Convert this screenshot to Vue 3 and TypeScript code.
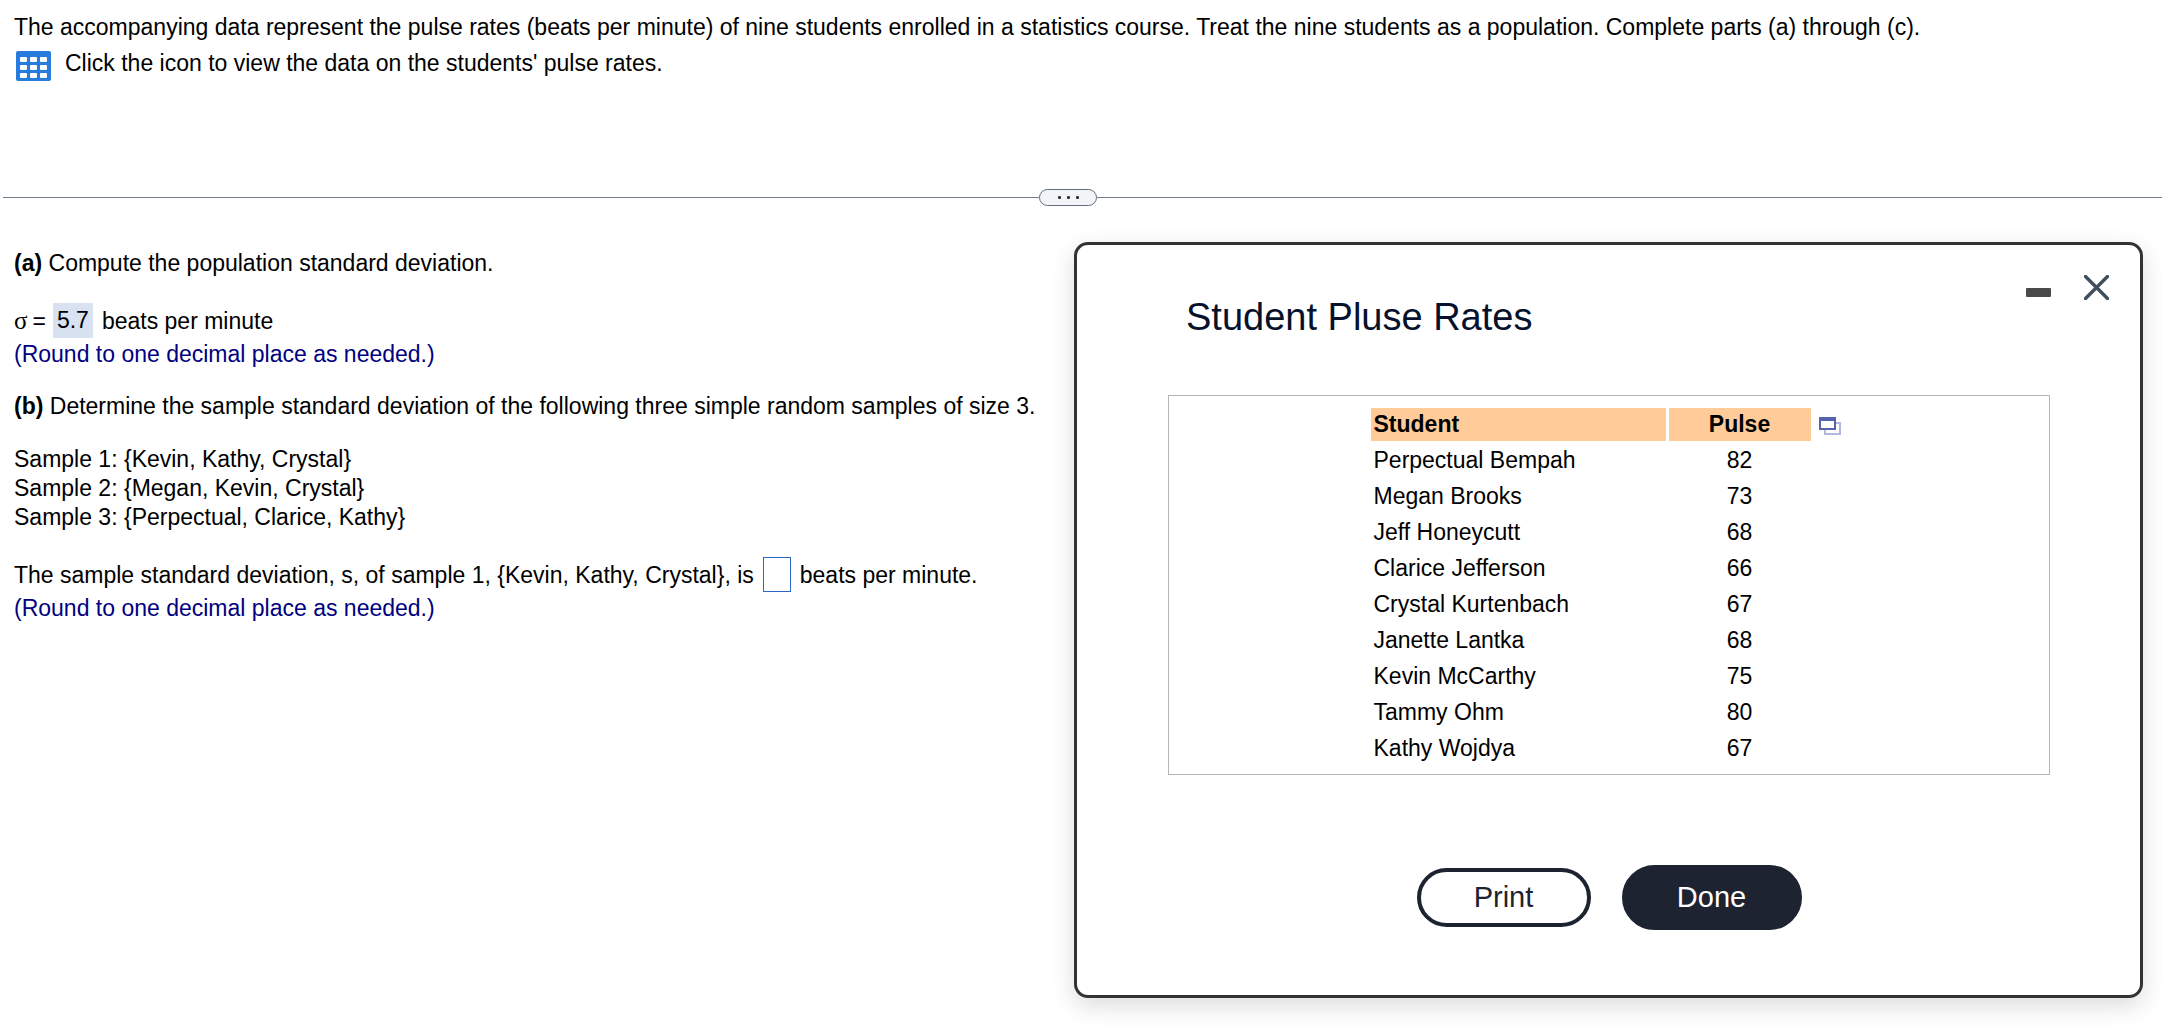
<script setup lang="ts">
import { ref } from 'vue'

interface Student {
  name: string
  pulse: number
}

const students: Student[] = [
  { name: 'Perpectual Bempah', pulse: 82 },
  { name: 'Megan Brooks', pulse: 73 },
  { name: 'Jeff Honeycutt', pulse: 68 },
  { name: 'Clarice Jefferson', pulse: 66 },
  { name: 'Crystal Kurtenbach', pulse: 67 },
  { name: 'Janette Lantka', pulse: 68 },
  { name: 'Kevin McCarthy', pulse: 75 },
  { name: 'Tammy Ohm', pulse: 80 },
  { name: 'Kathy Wojdya', pulse: 67 },
]

const samples: string[][] = [
  ['Kevin', 'Kathy', 'Crystal'],
  ['Megan', 'Kevin', 'Crystal'],
  ['Perpectual', 'Clarice', 'Kathy'],
]

const cells = [0, 1, 2]
const answer = ref('')
const dialogOpen = ref(true)
</script>

<template>
  <div class="page">
    <header class="intro">
      <p>
        The accompanying data represent the pulse rates (beats per minute) of nine students enrolled in a
        statistics course. Treat the nine students as a population. Complete parts (a) through (c).
      </p>
      <div class="data-link">
        <button class="icon-button" type="button" aria-label="View the data" @click="dialogOpen = true">
          <svg width="35" height="30" viewBox="0 0 35 30" aria-hidden="true">
            <rect width="35" height="30" rx="2" fill="#267bdc" />
            <g fill="#fff">
              <template v-for="r in cells" :key="r">
                <rect v-for="c in cells" :key="c" :x="4 + c * 10" :y="6 + r * 8" width="7" height="5" rx="1" />
              </template>
            </g>
          </svg>
        </button>
        <p>Click the icon to view the data on the students' pulse rates.</p>
      </div>
    </header>

    <div class="divider">
      <button class="divider-handle" type="button" aria-label="Resize panels">
        <i></i><i></i><i></i>
      </button>
    </div>

    <div class="columns">
      <main class="question">
        <p><b>(a)</b> Compute the population standard deviation.</p>
        <p class="answer-line sigma-line">
          <span class="sigma">σ</span><span class="equals">=</span><span class="given">5.7</span><span>beats per minute</span>
        </p>
        <p class="hint">(Round to one decimal place as needed.)</p>
        <p class="part-b"><b>(b)</b> Determine the sample standard deviation of the following three simple random samples of size 3.</p>
        <ul class="samples">
          <li v-for="(s, i) in samples" :key="i">Sample {{ i + 1 }}: {{ '{' + s.join(', ') + '}' }}</li>
        </ul>
        <div class="answer-line">
          <label for="answer">The sample standard deviation, s, of sample 1, {Kevin, Kathy, Crystal}, is</label>
          <input id="answer" v-model="answer" type="text" />
          <span>beats per minute.</span>
        </div>
        <p class="hint">(Round to one decimal place as needed.)</p>
      </main>

      <section v-if="dialogOpen" class="dialog" role="dialog" aria-labelledby="dialog-title">
        <div class="dialog-head">
          <h2 id="dialog-title">Student Pluse Rates</h2>
          <div class="window-controls">
            <button class="icon-button" type="button" aria-label="Minimize">
              <svg width="25" height="25" viewBox="0 0 25 25" aria-hidden="true">
                <rect y="13" width="25" height="9" rx="1" fill="#4a4a4a" />
              </svg>
            </button>
            <button class="icon-button" type="button" aria-label="Close" @click="dialogOpen = false">
              <svg width="25" height="25" viewBox="0 0 25 25" aria-hidden="true">
                <path d="M1.5 1.5 23.5 23.5M23.5 1.5 1.5 23.5" stroke="#414e5b" stroke-width="3.4" stroke-linecap="round" />
              </svg>
            </button>
          </div>
        </div>

        <div class="data-box">
          <table>
            <thead>
              <tr>
                <th class="name" scope="col">Student</th>
                <th class="pulse" scope="col">Pulse</th>
              </tr>
            </thead>
            <tbody>
              <tr v-for="s in students" :key="s.name">
                <td>{{ s.name }}</td>
                <td class="pulse">{{ s.pulse }}</td>
              </tr>
            </tbody>
          </table>
          <button class="icon-button copy" type="button" aria-label="Copy data">
            <svg width="22" height="18" viewBox="0 0 22 18" aria-hidden="true">
              <rect x="6" y="6" width="15" height="11" fill="#fff" stroke="#b4b8dc" stroke-width="2" />
              <rect x="1" y="1" width="15" height="11" fill="#fff" stroke="#5763ae" stroke-width="2" />
              <path d="M0 0h17v4H0z" fill="#5763ae" />
            </svg>
          </button>
        </div>

        <div class="actions">
          <button class="print" type="button">Print</button>
          <button class="done" type="button" @click="dialogOpen = false">Done</button>
        </div>
      </section>
    </div>
  </div>
</template>

<style>
body {
  margin: 0;
  background: #fff;
}
</style>

<style scoped>
.page {
  box-sizing: border-box;
  padding-top: 12px;
  overflow: hidden;
  font-family: "Liberation Sans", Arial, sans-serif;
  font-size: 23px;
  line-height: 30px;
  color: #000;
}

p,
h2,
ul {
  margin: 0;
  padding: 0;
}

.icon-button {
  display: block;
  padding: 0;
  border: 0;
  background: none;
  cursor: pointer;
}

.icon-button svg {
  display: block;
}

.intro {
  padding-left: 14px;
}

.data-link {
  display: flex;
  gap: 14px;
  margin-top: 6px;
  padding-left: 2px;
}

.data-link .icon-button {
  margin-top: 3px;
}

.divider {
  display: flex;
  align-items: center;
  justify-content: center;
  margin: 108px 0 0 3px;
}

.divider::before,
.divider::after {
  content: "";
  flex: 1 1 0;
  height: 1px;
  background: #6f7c8c;
}

.divider::before {
  flex-grow: 1036;
}

.divider::after {
  flex-grow: 1065;
}

.divider-handle {
  box-sizing: border-box;
  display: flex;
  align-items: center;
  justify-content: center;
  gap: 6px;
  width: 58px;
  height: 17px;
  padding: 0;
  border: 1px solid #5f6d80;
  border-radius: 9px;
  background: #f3f4f8;
}

.divider-handle i {
  width: 3px;
  height: 3px;
  border-radius: 1px;
  background: #333;
}

.columns {
  display: grid;
  grid-template-columns: minmax(0, 1074fr) minmax(0, 1069fr);
  align-items: start;
  margin-top: 36px;
  padding: 0 19px 28px 0;
}

.question {
  padding: 6px 0 0 14px;
  white-space: nowrap;
}

.answer-line {
  display: flex;
  align-items: center;
  height: 35px;
}

.sigma-line {
  margin-top: 25px;
}

.sigma {
  font-family: "Liberation Serif", "Times New Roman", serif;
  font-size: 25px;
}

.equals {
  margin: 0 7px 0 5px;
}

.given {
  padding: 0 4px;
  margin-right: 9px;
  line-height: 35px;
  background: #d9e2f1;
}

.hint {
  margin-top: 1px;
  color: #000080;
}

.part-b {
  margin-top: 22px;
}

.samples {
  margin: 24px 0 25px;
  list-style: none;
  line-height: 29px;
}

.answer-line input {
  box-sizing: border-box;
  width: 28px;
  height: 35px;
  margin: 0 9px;
  padding: 0 4px;
  border: 1px solid #2b66c9;
  border-radius: 0;
  font: inherit;
  outline: none;
}

.dialog {
  box-sizing: border-box;
  border: 3px solid #333;
  border-radius: 14px;
  padding: 30px 90px 65px 91px;
  background: #fff;
  box-shadow: 0 8px 24px rgba(0, 0, 0, 0.14);
}

.dialog-head {
  display: flex;
  justify-content: space-between;
  align-items: flex-start;
  margin-right: -59px;
}

.dialog-head h2 {
  padding: 20px 0 0 18px;
  font-size: 38px;
  font-weight: 400;
  line-height: 44px;
  color: #06112b;
}

.window-controls {
  display: flex;
  gap: 33px;
}

.data-box {
  display: flex;
  justify-content: center;
  align-items: flex-start;
  gap: 5px;
  margin-top: 56px;
  padding: 9px 10px 6px 0;
  border: 1px solid #b5b5b5;
}

table {
  border-collapse: separate;
  border-spacing: 3px;
}

th,
td {
  box-sizing: border-box;
  height: 33px;
  padding: 0 3px;
  line-height: 33px;
  text-align: left;
}

th {
  background: #ffcc99;
}

.name {
  width: 295px;
}

th.pulse {
  width: 142px;
}

.pulse {
  text-align: center;
}

.copy {
  margin-top: 12px;
}

.actions {
  display: flex;
  align-items: center;
  justify-content: center;
  gap: 31px;
  margin-top: 90px;
}

.actions button {
  box-sizing: border-box;
  border: 4px solid #1d2330;
  border-radius: 33px;
  font-family: inherit;
  font-size: 29px;
  cursor: pointer;
}

.print {
  width: 174px;
  height: 59px;
  background: #fff;
  color: #1d2330;
}

.done {
  width: 180px;
  height: 65px;
  background: #1d2330;
  color: #fff;
}
</style>
